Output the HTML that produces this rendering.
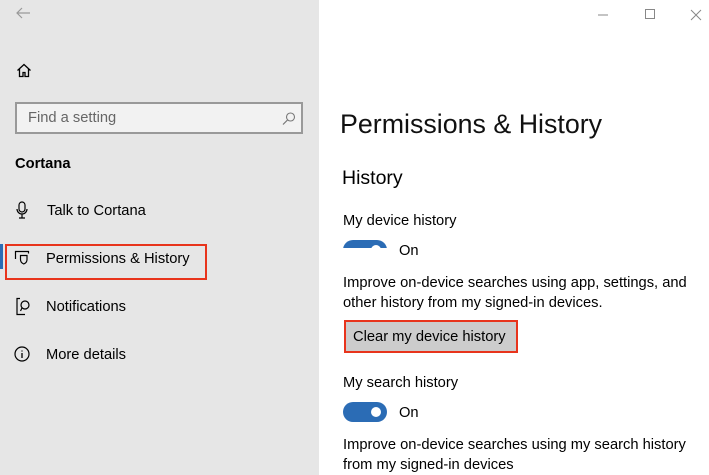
<!DOCTYPE html>
<html><head><meta charset="utf-8"><style>
*{margin:0;padding:0;box-sizing:border-box}
body{width:709px;height:475px;overflow:hidden;font-family:"Liberation Sans",sans-serif;background:#fff;position:relative;color:#000}
.side{position:absolute;left:0;top:0;width:319px;height:475px;background:#e6e6e6}
.a{position:absolute;white-space:nowrap}
.t{font-size:14.7px}
svg{position:absolute}
</style></head><body>
<div class="side">
<svg style="left:14px;top:5px" width="18" height="16" viewBox="0 0 18 16"><path d="M16 8H3M8 3L3 8l5 5" stroke="#999" stroke-width="1.2" fill="none"/></svg>
<svg style="left:16px;top:63px" width="16" height="15" viewBox="0 0 16 15"><path d="M1.5 7.5L8 1.5l6.5 6M3.5 6v7.5h3.5V9.5h2v4h3.5V6" stroke="#000" stroke-width="1.3" fill="none"/></svg>
<div class="a" style="left:15px;top:102px;width:288px;height:32px;border:2px solid #999;background:#f2f2f2"></div>
<div class="a t" style="left:28px;top:110px;color:#666">Find a setting</div>
<svg style="left:281px;top:111px" width="16" height="16" viewBox="0 0 16 16"><circle cx="9.5" cy="6" r="4" stroke="#777" stroke-width="1.1" fill="none"/><path d="M6.5 9L2 13.5" stroke="#777" stroke-width="1.2"/></svg>
<div class="a" style="left:15px;top:156px;font-size:14.7px;font-weight:bold">Cortana</div>
<svg style="left:15px;top:201px" width="14" height="18" viewBox="0 0 14 18"><rect x="4" y="1" width="6" height="10" rx="3" stroke="#000" stroke-width="1.2" fill="none"/><path d="M2 8a5 5 0 0 0 10 0M7 13v4M4 17h6" stroke="#000" stroke-width="1.2" fill="none"/></svg>
<div class="a t" style="left:47px;top:203px">Talk to Cortana</div>
<div class="a" style="left:0;top:244px;width:3px;height:25px;background:#2b6cb5"></div>
<div class="a" style="left:5px;top:244px;width:202px;height:36px;border:2px solid #e8341c"></div>
<svg style="left:14px;top:250px" width="18" height="16" viewBox="0 0 18 16"><path d="M1.5 9V1.5h13v2" stroke="#000" stroke-width="1.2" fill="none"/><path d="M6.5 5.5h6.5v4c0 2.5-2 4-3.2 4.5-1.2-.5-3.3-2-3.3-4.5z" stroke="#000" stroke-width="1.2" fill="none"/></svg>
<div class="a t" style="left:46px;top:251px">Permissions &amp; History</div>
<svg style="left:15px;top:297px" width="16" height="19" viewBox="0 0 16 19"><path d="M5 1.5H2v16h8" stroke="#000" stroke-width="1.2" fill="none"/><circle cx="10" cy="8" r="4" stroke="#000" stroke-width="1.2" fill="none"/><path d="M7 11l-1.5 3" stroke="#000" stroke-width="1.2"/></svg>
<div class="a t" style="left:46px;top:299px">Notifications</div>
<svg style="left:14px;top:345px" width="18" height="18" viewBox="0 0 18 18"><circle cx="8" cy="9" r="7" stroke="#000" stroke-width="1.2" fill="none"/><path d="M8 8v5M8 5.5v1" stroke="#000" stroke-width="1.3"/></svg>
<div class="a t" style="left:46px;top:347px">More details</div>
</div>
<svg style="left:597px;top:9px" width="110" height="12" viewBox="0 0 110 12"><path d="M1 6h10" stroke="#888"/><rect x="48.5" y="0.5" width="9" height="9" stroke="#888" fill="none"/><path d="M94 1l10 10M104 1L94 11" stroke="#888"/></svg>
<div class="a" style="left:340px;top:109px;font-size:26.8px;font-weight:300;color:#111">Permissions &amp; History</div>
<div class="a" style="left:342px;top:167px;font-size:19.5px">History</div>
<div class="a t" style="left:343px;top:213px">My device history</div>
<div class="a" style="left:343px;top:240px;width:44px;height:8px;overflow:hidden"><div style="width:44px;height:20px;border-radius:10px;background:#2b6cb5;position:relative"><div style="position:absolute;left:28px;top:5px;width:10px;height:10px;border-radius:5px;background:#fff"></div></div></div>
<div class="a t" style="left:399px;top:243px">On</div>
<div class="a t" style="left:343px;top:273px;line-height:20px">Improve on-device searches using app, settings, and<br>other history from my signed-in devices.</div>
<div class="a" style="left:344px;top:320px;width:174px;height:33px;border:2px solid #e8341c;background:#ccc"></div>
<div class="a t" style="left:353px;top:329px">Clear my device history</div>
<div class="a t" style="left:343px;top:375px">My search history</div>
<div class="a" style="left:343px;top:402px;width:44px;height:20px;border-radius:10px;background:#2b6cb5"><div style="position:absolute;left:28px;top:5px;width:10px;height:10px;border-radius:5px;background:#fff"></div></div>
<div class="a t" style="left:399px;top:405px">On</div>
<div class="a t" style="left:343px;top:435px;line-height:20px">Improve on-device searches using my search history<br>from my signed-in devices</div>
</body></html>
